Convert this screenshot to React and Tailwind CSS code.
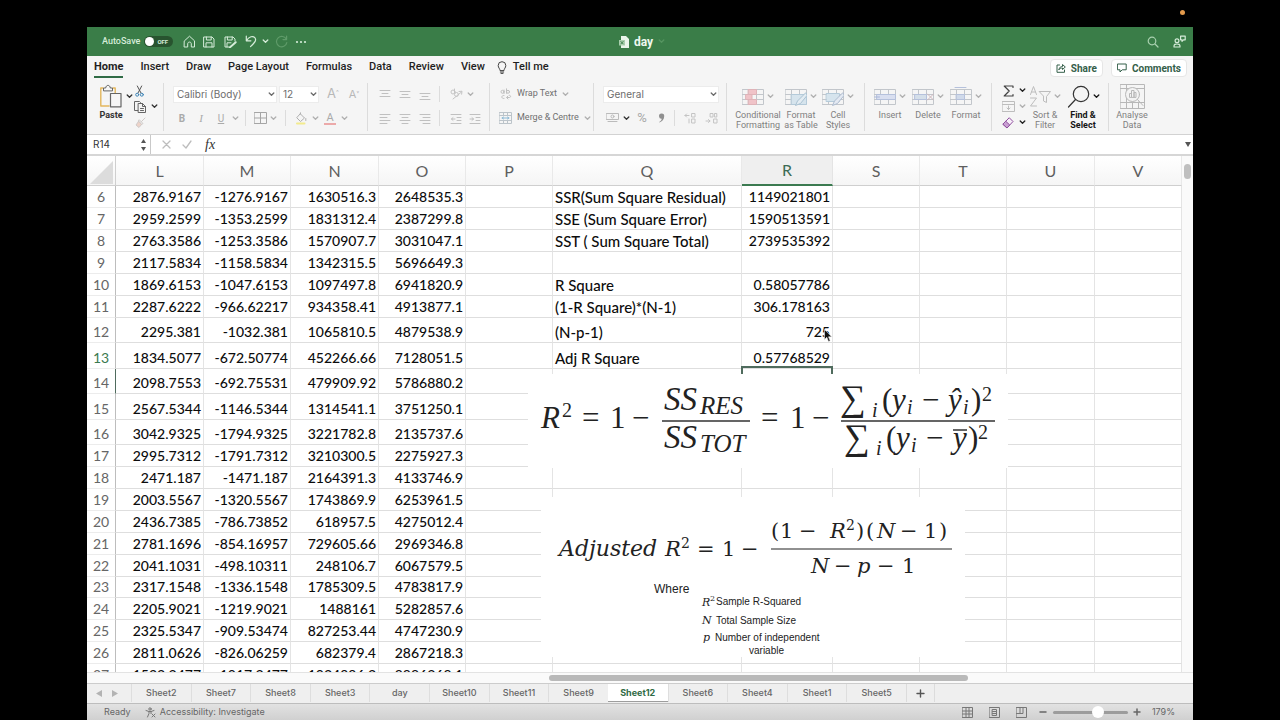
import React from "react";

const Chevron = ({ className = "text-[#6b6b6b]" }) => (
  <svg width="7" height="5" viewBox="0 0 7 5" className={"shrink-0 " + className} fill="none" stroke="currentColor" strokeWidth="1.3" strokeLinecap="round" strokeLinejoin="round" aria-hidden="true">
    <path d="M1.200 1l2.300 2.300L5.800 1" />
  </svg>
);

const Icon = ({ w = 12, h = 12, className = "", sw = 1, children }) => (
  <svg width={w} height={h} viewBox={`0 0 ${w} ${h}`} className={"shrink-0 " + className} fill="none" stroke="currentColor" strokeWidth={sw} strokeLinecap="round" strokeLinejoin="round" aria-hidden="true">
    {children}
  </svg>
);

const IconButton = ({ label, className = "", children }) => (
  <button type="button" aria-label={label} className={"flex shrink-0 items-center justify-center " + className}>
    {children}
  </button>
);

function TitleBar() {
  return (
    <header className="grid h-[29px] shrink-0 grid-cols-[1fr_auto_1fr] items-center bg-[#3a7d48] text-[#d5ecd9]">
      <div className="flex items-center pl-[15px] font-['Roboto',sans-serif]">
        <label className="flex items-center gap-1 text-[9px] font-medium">
          AutoSave
          <input type="checkbox" role="switch" className="peer sr-only" />
          <span className="flex h-[11px] w-[29px] items-center gap-[3px] rounded-full bg-[#28542f] pl-px text-[6px] font-bold text-[#d5ecd9]">
            <span className="h-[9px] w-[9px] rounded-full bg-white" />
            OFF
          </span>
        </label>
        <IconButton label="Home" className="ml-[9px] w-[14px]">
          <Icon w={13} h={13}><path d="M1.5 5.8L6.5 1.2l5 4.6v6.2H8.3V8.8c0-2.3-3.6-2.3-3.6 0V12H1.5z" /></Icon>
        </IconButton>
        <IconButton label="Save" className="ml-[6px] w-[14px]">
          <Icon><path d="M1 1h8l2 2v8H1z M3.4 1v3h4.8V1 M3 11V6.8h6V11" /></Icon>
        </IconButton>
        <IconButton label="Save as" className="ml-[7px] w-[14px]">
          <Icon w={13}><path d="M5 11H1V1h8l2 2v2 M3.4 1v3h4.8V1 M3 11V6.8h4" /><path d="M5.8 11.4l5.900-5.200" strokeWidth="2" /></Icon>
        </IconButton>
        <IconButton label="Undo" className="ml-[7px] w-[13px]">
          <Icon w={12} h={13} sw={1.2}><path d="M1.3 1.2v4.6h4.6 M1.6 5.4C4 1.4 8 .6 9.8 2.6c2 2.4.3 4.6-4.3 9" /></Icon>
        </IconButton>
        <IconButton label="Undo options" className="ml-[3px] w-[10px]"><Chevron className="text-[#d5ecd9]" /></IconButton>
        <IconButton label="Redo" className="ml-[4px] w-[14px] text-[#5f9b69]">
          <Icon w={13} h={13} sw={1.2}><path d="M11.6 1v3.6H8 M11.4 4.4A5.2 5.2 0 1 0 11.8 7.6" /></Icon>
        </IconButton>
        <IconButton label="More" className="ml-[6px] w-[14px]">
          <svg width="12" height="4" viewBox="0 0 12 4" fill="currentColor" aria-hidden="true"><circle cx="2" cy="2" r="1.1" /><circle cx="6" cy="2" r="1.1" /><circle cx="10" cy="2" r="1.1" /></svg>
        </IconButton>
      </div>
      <h1 className="flex items-center gap-[5px] pl-[4px] font-['Roboto',sans-serif] text-[12px] font-bold leading-[16px] text-[#eef8ef]">
        <svg width="10" height="12" viewBox="0 0 10 12" aria-hidden="true">
          <path d="M2 0h5l3 3v9H2z" fill="#e9f5ea" />
          <rect x="0" y="4" width="6" height="5.5" fill="#a9cfae" />
          <path d="M1.6 5.2l2.8 3M4.4 5.2l-2.8 3" stroke="#3a7d48" strokeWidth=".9" />
        </svg>
        day
        <Chevron className="text-[#559560]" />
      </h1>
      <div className="flex items-center justify-end gap-[14px] pr-[7px]">
        <IconButton label="Search" className="text-[#a9d0af]">
          <Icon sw={1.2}><circle cx="5" cy="5" r="3.8" /><path d="M8 8l3 3" /></Icon>
        </IconButton>
        <IconButton label="Account">
          <Icon w={13} h={13} sw={1.2}><circle cx="4" cy="5.8" r="1.9" /><path d="M1 12c-.3-3 1.600-3 3-3s3.300 0 3 3z M7.600 1.200h4.600v3.600h-1.800L9 6.300V4.800H7.600z" /></Icon>
        </IconButton>
      </div>
    </header>
  );
}

const MENU = ["Insert", "Draw", "Page Layout", "Formulas", "Data", "Review", "View"];

function MenuTabs() {
  return (
    <div className="flex h-6 shrink-0 items-center pl-[7px] pr-[6px] font-['Roboto',sans-serif] text-[#1f1f1f]">
      <nav aria-label="Ribbon tabs" className="flex items-center gap-[17px] pb-[2px] text-[11px] font-medium leading-[16px]">
        <a href="#home" className="relative font-bold">
          Home
          <span className="absolute inset-x-0 -bottom-[3px] h-[2px] bg-[#2f6b45]" />
        </a>
        {MENU.map((m) => (
          <a key={m} href={"#" + m.toLowerCase().replace(" ", "-")}>{m}</a>
        ))}
      </nav>
      <button type="button" className="ml-[12px] flex items-center gap-[6px] pb-[2px] text-[11px] font-medium leading-[16px]">
        <Icon w={10} h={13} className="text-[#444]"><path d="M3 9.200C3 7.600 1.200 6.800 1.200 4.500a3.800 3.800 0 0 1 7.600 0C8.800 6.800 7 7.600 7 9.200z M3.300 11h3.400 M4 12.400h2" /></Icon>
        Tell me
      </button>
      <div className="ml-auto flex items-center gap-2 text-[10px] font-bold text-[#35604a]">
        <button type="button" className="flex h-[18px] items-center gap-[5px] rounded-sm border border-[#e6e6e6] bg-white px-[5px]">
          <Icon w={10} h={10}><path d="M3.500 2H1v7.300h7.500V7 M3 6.500C3.300 4 5 3.500 6.500 3.500V1.500L9.300 4 6.500 6.500V5C5 5 4 5.300 3 6.500z" /></Icon>
          Share
        </button>
        <button type="button" className="flex h-[18px] items-center gap-[5px] rounded-sm border border-[#e6e6e6] bg-white px-[5px]">
          <Icon w={10} h={10}><path d="M.8 1h8.400v5.800H5.200L3 9V6.800H.8z" /></Icon>
          Comments
        </button>
      </div>
    </div>
  );
}

const Group = ({ className = "", children }) => (
  <div className={"flex shrink-0 border-r border-[#dcdcdc] " + className}>{children}</div>
);

const Rule = ({ className = "" }) => <span className={"h-4 w-px shrink-0 bg-[#dcdcdc] " + className} />;

const Lines = ({ rows }) => (
  <Icon h={11} className="text-[#c0c0c0]">
    {rows.map(([x1, x2], i) => <path key={i} d={`M${x1} ${1.5 + i * 3}H${x2}`} />)}
  </Icon>
);

const SelectBox = ({ label, value, className }) => (
  <div className={"relative flex shrink-0 " + className}>
    <select aria-label={label} defaultValue={value} className="h-[17px] w-full appearance-none border border-[#ececec] bg-white pl-[3px] text-[10px] leading-[15px] text-[#6d6d6d]">
      <option>{value}</option>
    </select>
    <span className="pointer-events-none absolute inset-y-0 right-[2px] flex items-center"><Chevron /></span>
  </div>
);

const BigButton = ({ lines, icon, chevron = true, active = false, className }) => (
  <button type="button" className={"flex shrink-0 flex-col items-center whitespace-nowrap text-[9px] leading-[10px] " + (active ? "font-bold text-[#161616] " : "font-normal text-[#808080] ") + className}>
    <span className="flex h-[27px] items-center gap-[3px]">
      {icon}
      {chevron && <Chevron className={active ? "text-[#161616]" : "text-[#b0b0b0]"} />}
    </span>
    {lines.map((l) => <span key={l}>{l}</span>)}
  </button>
);

const GridIcon = ({ children }) => (
  <Icon w={22} h={20} className="text-[#c2c6cb]">
    <path d="M.5 2.500h21v15H.5z M.5 7.500h21 M.5 12.500h21 M6.500 2.500v15 M14.500 2.500v15" />
    {children}
  </Icon>
);

function Ribbon() {
  return (
    <div role="toolbar" aria-label="Home" className="flex h-[54px] shrink-0 overflow-hidden py-[3px] font-['Roboto',sans-serif]">
      <Group className="w-[77px] pl-[9px]">
        <button type="button" className="flex w-[30px] flex-col items-center text-[9px] font-bold leading-[11px] text-[#333]">
          <Icon w={24} h={27} className="text-[#666]">
            <path d="M4 5H1.800v18H10 M14 5h2.200v5" stroke="#e3b75d" strokeWidth="1.400" />
            <path d="M4.500 7.500V5h2.200C7 1.500 11 1.500 11.300 5h2.200v2.500z" fill="#f6f6f6" />
            <path d="M11.500 10.500H22v13.300H11.500z" fill="#f6f6f6" strokeWidth="1.200" />
          </Icon>
          Paste
        </button>
        <IconButton label="Paste options" className="mt-[9px] h-[8px] w-[6px]"><Chevron className="text-[#333]" /></IconButton>
        <div className="flex flex-col items-start gap-[3px] pl-px pt-[1px]">
          <IconButton label="Cut" className="ml-[2px] h-[13px]">
            <Icon w={9} h={12} className="text-[#555]"><path d="M2.300 1l3.700 7 M6.700 1L3 8" /><circle cx="2.200" cy="9.700" r="1.500" stroke="#3f86b8" /><circle cx="6.800" cy="9.700" r="1.500" stroke="#3f86b8" /></Icon>
          </IconButton>
          <div className="flex items-center gap-1">
            <IconButton label="Copy" className="h-[13px] text-[#666]">
              <Icon w={14} h={13}><path d="M5 10.500H1.500V1.500h5l1 1 M5.500 3.500h4l3 3v6h-7z M9.500 3.500v3h3 M7.500 8.500h3 M7.500 10.500h3" /></Icon>
            </IconButton>
            <Chevron className="text-[#333]" />
          </div>
          <IconButton label="Format painter" className="ml-[2px] h-[13px]">
            <Icon w={11} h={11} className="text-[#cfcac8]"><path d="M10 1L6.500 4.500 M4.500 3l3.500 3.500-1.500 1L3.500 4.500z" /><path d="M3.500 4.500L1 8l3 2.500 2.500-3z" fill="#eed3c9" /></Icon>
          </IconButton>
        </div>
      </Group>

      <Group className="w-[204px] flex-col gap-[6px] pl-[9px] pt-[2px]">
        <div className="flex h-[18px] items-center gap-[2px] font-['Inter',sans-serif]">
          <SelectBox label="Font" value="Calibri (Body)" className="w-[104px]" />
          <SelectBox label="Font size" value="12" className="w-[40px]" />
          <IconButton label="Increase font size" className="ml-1 w-[16px] text-[13px] text-[#b8b8b8]">A<span className="mb-[6px] text-[6px]">^</span></IconButton>
          <IconButton label="Decrease font size" className="ml-1 w-[14px] text-[11px] text-[#b8b8b8]">A<span className="mb-[4px] text-[6px]">˅</span></IconButton>
        </div>
        <div className="flex h-[18px] items-center text-[10px] text-[#aaaaaa]">
          <IconButton label="Bold" className="w-[18px] font-bold">B</IconButton>
          <IconButton label="Italic" className="w-[20px] font-['Liberation_Serif',serif] text-[11px] italic">I</IconButton>
          <IconButton label="Underline" className="w-[20px] underline">U</IconButton>
          <IconButton label="Underline options" className="w-[8px]"><Chevron className="text-[#b0b0b0]" /></IconButton>
          <Rule className="mx-[6px]" />
          <IconButton label="Borders" className="w-[16px]"><Icon w={13} h={12} className="text-[#a5a5a5]"><path d="M.5.500h12v11H.5z M6.500.500v11 M.5 6h12" /></Icon></IconButton>
          <IconButton label="Border options" className="w-[10px]"><Chevron className="text-[#b0b0b0]" /></IconButton>
          <Rule className="mx-[7px]" />
          <IconButton label="Fill colour" className="w-[16px]"><Icon w={12} h={13} className="text-[#b0b0b0]"><path d="M5.500 2L9.500 6 5.500 9.500 2 6z M5.500 2V.8 M10.800 6.500v2" /><path d="M2 11.500h7.500" stroke="#f3eb8e" strokeWidth="2" /></Icon></IconButton>
          <IconButton label="Fill options" className="w-[12px]"><Chevron className="text-[#b0b0b0]" /></IconButton>
          <IconButton label="Font colour" className="w-[18px]"><span className="border-b-2 border-[#ecaaaa] px-[2px] text-[11px] leading-[11px]">A</span></IconButton>
          <IconButton label="Font colour options" className="w-[10px]"><Chevron className="text-[#b0b0b0]" /></IconButton>
        </div>
      </Group>

      <Group className="w-[122px] flex-col gap-[6px] pl-[10px] pt-[2px]">
        <div className="flex h-[18px] items-center">
          <IconButton label="Align top" className="w-[13px]"><Lines rows={[[1, 11], [3, 9], [1, 11]]} /></IconButton>
          <IconButton label="Align middle" className="ml-[7px] w-[13px] pt-[3px]"><Lines rows={[[1, 11], [3, 9], [1, 11]]} /></IconButton>
          <IconButton label="Align bottom" className="ml-[7px] w-[13px] pt-[6px]"><Lines rows={[[1, 11], [3, 9], [1, 11]]} /></IconButton>
          <Rule className="ml-[8px] mr-[9px]" />
          <IconButton label="Orientation" className="w-[14px]"><Icon w={13} className="text-[#c4c4c4]"><circle cx="3" cy="4" r="2" /><circle cx="6.500" cy="6.500" r="2" /><path d="M4.500 1v4 M3 11l8.500-7 M9 3.500l3-.3-.4 3" /></Icon></IconButton>
          <IconButton label="Orientation options" className="ml-[2px] w-[10px]"><Chevron className="text-[#b0b0b0]" /></IconButton>
        </div>
        <div className="flex h-[18px] items-center">
          <IconButton label="Align left" className="w-[13px]"><Lines rows={[[1, 11], [1, 8], [1, 11], [1, 8]]} /></IconButton>
          <IconButton label="Align centre" className="ml-[7px] w-[13px]"><Lines rows={[[1, 11], [3, 9], [1, 11], [3, 9]]} /></IconButton>
          <IconButton label="Align right" className="ml-[7px] w-[13px]"><Lines rows={[[1, 11], [4, 11], [1, 11], [4, 11]]} /></IconButton>
          <Rule className="ml-[8px] mr-[9px]" />
          <IconButton label="Decrease indent" className="w-[13px]"><Icon h={11} className="text-[#c0c0c0]"><path d="M1 1.500h10 M7 4.500h4 M7 7.500h4 M1 10.500h10 M5 6H1.500M3 4.600L1.500 6 3 7.400" /></Icon></IconButton>
          <IconButton label="Increase indent" className="ml-[6px] w-[13px]"><Icon h={11} className="text-[#c0c0c0]"><path d="M1 1.500h10 M7 4.500h4 M7 7.500h4 M1 10.500h10 M1 6h3.500M3 4.600L4.500 6 3 7.400" /></Icon></IconButton>
        </div>
      </Group>

      <Group className="w-[104px] flex-col gap-[6px] pl-[9px] pt-[2px] text-[9px] font-normal text-[#707070]">
        <button type="button" className="flex h-[18px] items-center gap-[5px] whitespace-nowrap">
          <Icon w={13} className="text-[#c0c0c0]"><circle cx="3.500" cy="3.800" r="1.500" /><path d="M5 2v3.500 M7.500 .8v4.500" /><circle cx="9" cy="3.800" r="1.500" /><path d="M5 7.500c-3-.5-3 3.500 0 3 M8 9.500h2.500c1.500 0 1.500-2.300 0-2.300 M9 8L7.500 9.500 9 11" /></Icon>
          Wrap Text <Chevron className="text-[#b0b0b0]" />
        </button>
        <button type="button" className="flex h-[18px] items-center gap-[5px] whitespace-nowrap">
          <Icon w={13} className="text-[#bcc4ca]"><path d="M.5.500h12v11H.5z M.5 3.500h12 M.5 8.500h12 M4.500.500v3M8.500.500v3M4.500 8.500v3M8.500 8.500v3" /><path d="M3 6h7 M4.500 5L3 6l1.500 1 M8.500 5L10 6 8.500 7" stroke="#8fbad5" /></Icon>
          Merge &amp; Centre <Chevron className="text-[#b0b0b0]" />
        </button>
      </Group>

      <Group className="w-[133px] flex-col gap-[6px] pl-[9px] pt-[2px]">
        <div className="flex h-[18px] items-center font-['Inter',sans-serif]"><SelectBox label="Number format" value="General" className="w-[116px]" /></div>
        <div className="flex h-[18px] items-center text-[#a8a8a8]">
          <IconButton label="Currency" className="ml-[2px] w-[14px]"><Icon w={13} h={10} className="text-[#bbbbbb]"><path d="M.5.500h12v6H.5z M2 8.500h9" /><circle cx="6.500" cy="3.500" r="1.500" /></Icon></IconButton>
          <IconButton label="Currency options" className="ml-[2px] w-[10px]"><Chevron className="text-[#333]" /></IconButton>
          <IconButton label="Percent" className="ml-1 w-[14px] text-[13px]">%</IconButton>
          <IconButton label="Comma" className="ml-[6px] w-[12px]"><svg width="7" height="10" viewBox="0 0 7 10" fill="#909090" aria-hidden="true"><path d="M3.500.5a2.600 2.600 0 0 1 2.700 2.800C6.200 6.500 4 8.500 1.500 9.500L1.200 9C2.800 8 3.600 7 3.700 5.700A2.600 2.600 0 1 1 3.500.5z" /></svg></IconButton>
          <Rule className="ml-[7px] mr-[8px]" />
          <IconButton label="Increase decimal" className="w-[14px]"><Icon w={13} className="text-[#c4c4c4]"><path d="M1 3.500h4 M2.500 2L1 3.500 2.500 5 M8 1.500h3v3.500H8z M8 7h3v4H8z M5 7v4" /></Icon></IconButton>
          <IconButton label="Decrease decimal" className="ml-[7px] w-[14px]"><Icon w={13} className="text-[#c4c4c4]"><path d="M1 9h4 M3.500 7.500L5 9l-1.500 1.500 M5.500 1.500h2.500v3.500H5.500z M9.800 1.500h2v3.500h-2z M9 7h3v4H9z" /></Icon></IconButton>
        </div>
      </Group>

      <Group className="w-[138px] pl-[8px]">
        <BigButton className="w-[46px]" lines={["Conditional", "Formatting"]} icon={<GridIcon><path d="M6.500 2.500h8v5h-8z M4 7.500h6v5H4z M6.500 12.500h8v5h-8z" fill="#f0c3c8" stroke="#dfb3b8" /></GridIcon>} />
        <BigButton className="w-[40px]" lines={["Format", "as Table"]} icon={<GridIcon><path d="M6.500 7.500h15v10h-15z" fill="#d6e4ed" stroke="#b4cad9" /><path d="M20.500 6l-8 8-2 4.500 5-2 6.500-8z" fill="#e3ecf2" stroke="#aac2d2" /></GridIcon>} />
        <BigButton className="w-[34px]" lines={["Cell", "Styles"]} icon={<GridIcon><path d="M4.500 6.500h13v8h-13z" fill="#d6e4ed" stroke="#b4cad9" /><path d="M20.500 6l-8 8-2 4.500 5-2 6.500-8z" fill="#e3e9f2" stroke="#aebcd0" /></GridIcon>} />
      </Group>

      <Group className="w-[127px] pl-[6px]">
        <BigButton className="w-[38px]" lines={["Insert"]} icon={<GridIcon><path d="M3 7.500h18.500v5H3z" fill="#d9dff0" stroke="#b5c1dc" /><path d="M.5 10h5" stroke="#aab8d8" /></GridIcon>} />
        <BigButton className="w-[38px]" lines={["Delete"]} icon={<GridIcon><path d="M3 7.500h11.500v5H3z" fill="#d5dfe9" stroke="#b5c1dc" /><path d="M15.500 7l6 6M21.500 7l-6 6" stroke="#cdb6bd" /></GridIcon>} />
        <BigButton className="w-[38px]" lines={["Format"]} icon={<GridIcon><path d="M6.500 7.500h8v5h-8z" fill="#d0daea" stroke="#b5c1dc" /><path d="M5 .500h11" stroke="#b5c1dc" /></GridIcon>} />
      </Group>

      <Group className="w-[117px] pl-[9px]">
        <div className="flex w-[25px] flex-col gap-[3px] pt-px">
          <div className="flex items-center gap-1">
            <IconButton label="AutoSum" className="h-[13px] w-[14px]"><Icon w={11} sw={1.200} className="text-[#444]"><path d="M10 2.500V1H1.200l5 5-5 5H10V9.500" /></Icon></IconButton>
            <Chevron className="text-[#222]" />
          </div>
          <div className="flex items-center gap-1">
            <IconButton label="Fill" className="h-[13px] w-[14px]"><Icon w={13} h={11} className="text-[#bdbdbd]"><path d="M.5.500h12v10H.5z M.5 3.500h12 M6.500 5v3.500 M5 7l1.500 1.500L8 7" /></Icon></IconButton>
            <Chevron className="text-[#b0b0b0]" />
          </div>
          <div className="flex items-center gap-1">
            <IconButton label="Clear" className="h-[13px] w-[14px]"><Icon w={12} className="text-[#8f4f9e]"><path d="M7.500 1l3.500 3.500-6 6.500L1.200 7.500z" fill="#f7eef9" /><path d="M4 4.500L7.800 8 5 11 1.200 7.500z" fill="#c9a0d3" /></Icon></IconButton>
            <Chevron className="text-[#222]" />
          </div>
        </div>
        <BigButton className="w-[38px]" lines={["Sort &", "Filter"]} icon={<Icon w={22} h={23} className="text-[#bdbdbd]"><path d="M1.500 9.500L4.500 1.500l3 8 M2.500 7h4 M1.500 13h6l-6 8h6 M10.500 6.500h11l-4 5v6l-3-1.500v-4.500z" /></Icon>} />
        <BigButton active className="w-[38px]" lines={["Find &", "Select"]} icon={<Icon w={23} h={24} sw={1.200} className="text-[#333]"><circle cx="14" cy="9" r="7.700" /><path d="M8.500 14.500L1.500 22" /></Icon>} />
      </Group>

      <div className="flex flex-1 pl-[8px]">
        <BigButton chevron={false} className="w-[30px]" lines={["Analyse", "Data"]} icon={<Icon w={25} h={25} className="text-[#b8b8b8]"><path d="M.5.500h24v24H.5z M.5 4.500h24 M.5 18.500h24 M6.500.500v24 M18.500 18v6 M12.500 18v6" /><circle cx="12.500" cy="10.500" r="7" fill="#f3f3f3" /><path d="M17.500 15.500l5.500 6 M9.500 13V9.500h2V13z M11.500 13V6.500h2.500V13z M14 13V8.500h2V13z" /></Icon>} />
      </div>
    </div>
  );
}

function FormulaBar() {
  return (
    <div className="flex h-[20px] shrink-0 items-center border-t border-[#d2d2d2] bg-white">
      <input aria-label="Name box" defaultValue="R14" className="w-[50px] pl-[6px] text-[10px] text-[#333]" />
      <button type="button" aria-label="Choose cell" className="flex w-[13px] justify-center">
        <svg width="5" height="12" viewBox="0 0 5 12" fill="#555" aria-hidden="true"><path d="M2.500 0L5 4H0z M2.500 12L0 8h5z" /></svg>
      </button>
      <span className="h-full w-px bg-[#c9c9c9]" />
      <IconButton label="Cancel" className="ml-[9px] w-[12px]"><Icon w={9} h={9} sw={1.300} className="text-[#bdbdbd]"><path d="M1 1l7 7M8 1L1 8" /></Icon></IconButton>
      <IconButton label="Enter" className="ml-[9px] w-[12px]"><Icon w={10} h={9} sw={1.300} className="text-[#bdbdbd]"><path d="M1 5l3 3 5-7" /></Icon></IconButton>
      <label htmlFor="formula" className="ml-[12px] font-['Liberation_Serif',serif] text-[14px] italic leading-[16px] text-[#333]">fx</label>
      <input id="formula" className="ml-2 min-w-0 flex-1 text-[10px]" />
      <IconButton label="Expand formula bar" className="w-[10px]"><svg width="6" height="5" viewBox="0 0 6 5" fill="#555" aria-hidden="true"><path d="M0 0h6L3 5z" /></svg></IconButton>
    </div>
  );
}

const COLUMNS = ["L", "M", "N", "O", "P", "Q", "R", "S", "T", "U", "V"];

const ROWS = [
  [6, "2876.9167", "-1276.9167", "1630516.3", "2648535.3", "SSR(Sum Square Residual)", "1149021801"],
  [7, "2959.2599", "-1353.2599", "1831312.4", "2387299.8", "SSE (Sum Square Error)", "1590513591"],
  [8, "2763.3586", "-1253.3586", "1570907.7", "3031047.1", "SST ( Sum Square Total)", "2739535392"],
  [9, "2117.5834", "-1158.5834", "1342315.5", "5696649.3"],
  [10, "1869.6153", "-1047.6153", "1097497.8", "6941820.9", "R Square", "0.58057786"],
  [11, "2287.6222", "-966.62217", "934358.41", "4913877.1", "(1-R Square)*(N-1)", "306.178163"],
  [12, "2295.381", "-1032.381", "1065810.5", "4879538.9", "(N-p-1)", "725"],
  [13, "1834.5077", "-672.50774", "452266.66", "7128051.5", "Adj R Square", "0.57768529"],
  [14, "2098.7553", "-692.75531", "479909.92", "5786880.2"],
  [15, "2567.5344", "-1146.5344", "1314541.1", "3751250.1"],
  [16, "3042.9325", "-1794.9325", "3221782.8", "2135737.6"],
  [17, "2995.7312", "-1791.7312", "3210300.5", "2275927.3"],
  [18, "2471.187", "-1471.187", "2164391.3", "4133746.9"],
  [19, "2003.5567", "-1320.5567", "1743869.9", "6253961.5"],
  [20, "2436.7385", "-786.73852", "618957.5", "4275012.4"],
  [21, "2781.1696", "-854.16957", "729605.66", "2969346.8"],
  [22, "2041.1031", "-498.10311", "248106.7", "6067579.5"],
  [23, "2317.1548", "-1336.1548", "1785309.5", "4783817.9"],
  [24, "2205.9021", "-1219.9021", "1488161", "5282857.6"],
  [25, "2325.5347", "-909.53474", "827253.44", "4747230.9"],
  [26, "2811.0626", "-826.06259", "682379.4", "2867218.3"],
  [27, "1523.3477", "-1017.3477", "1034996.3", "8886368.1"],
];

const rowHeight = (n) => {
  if (n === 12 || n === 14 || n === 16) return "h-[25px]";
  if (n === 13 || n === 15) return "h-[26px]";
  if (n === 23) return "h-[21px]";
  return "h-[22px]";
};

function Sheet() {
  const cell = "overflow-visible whitespace-nowrap border-b border-r border-b-[#dedede] border-r-[#e4e4e4] p-0 align-bottom";
  return (
    <table className="w-full table-fixed border-separate border-spacing-0 bg-white font-['Lato',sans-serif] text-[14px] font-medium leading-[20px] text-[#0c0c0c]">
      <colgroup>
        <col className="w-[29px]" />
        <col className="w-[88px]" />
        <col className="w-[87px]" />
        <col className="w-[88px]" />
        <col className="w-[87px]" />
        <col className="w-[87px]" />
        <col className="w-[189px]" />
        <col className="w-[91px]" />
        <col className="w-[87px]" />
        <col className="w-[87px]" />
        <col className="w-[88px]" />
        <col />
      </colgroup>
      <thead>
        <tr className="h-[30px] bg-linear-to-b from-white to-[#f5f5f5] text-[16px] text-[#5f5f5f]">
          <th className="border-b border-r border-[#cfcfcf] p-0 align-bottom">
            <svg width="25" height="25" viewBox="0 0 25 25" className="ml-auto mr-px" aria-hidden="true"><path d="M24 1v23H1z" fill="#dcdcdc" /></svg>
          </th>
          {COLUMNS.map((c) => (
            <th key={c} scope="col" className={"border-r p-0 font-normal " + (c === "R" ? "border-b-2 border-b-[#3b7a50] border-r-[#e4e4e4] bg-[#efefef] text-[#3d6b55]" : "border-b border-b-[#cfcfcf] border-r-[#e9e9e9]")}>{c}</th>
          ))}
        </tr>
      </thead>
      <tbody>
        {ROWS.map(([n, l, m, nn, o, q, r]) => (
          <tr key={n} className={rowHeight(n)}>
            <th scope="row" className={"border-b border-b-[#ececec] border-r p-0 align-bottom font-normal " + (n === 14 ? "border-r-[#4f6b5d] " : "border-r-[#bdbdbd] ") + (n === 13 ? "text-[#3b7a50]" : "text-[#666]")}>{n}</th>
            {[l, m, nn, o].map((v, i) => (
              <td key={i} className={cell + " pr-[2px] text-right"}>{v}</td>
            ))}
            <td className={cell} />
            <td className={cell + " pl-[2px] text-[15px]"}>{q}</td>
            <td className={cell + " relative pr-[2px] text-right"}>
              {r}
              {n === 14 && <span className="absolute -bottom-px -left-px -right-px -top-[3px] border-2 border-[#4f6b5d]" />}
            </td>
            <td className={cell} />
            <td className={cell} />
            <td className={cell} />
            <td className={cell} />
          </tr>
        ))}
      </tbody>
    </table>
  );
}

function RSquaredFigure() {
  return (
    <svg width="480" height="94" viewBox="0 0 480 94" className="absolute left-[441px] top-[218px] bg-white font-['Liberation_Serif',serif]" fill="#222" role="img" aria-label="R squared formula">
      <g fontSize="31">
        <text x="13" y="54" fontStyle="italic">R</text>
        <text x="34" y="43" fontSize="20">2</text>
        <text x="54" y="54">=</text>
        <text x="82" y="54">1</text>
        <text x="104" y="54">−</text>
        <text x="136" y="36" fontSize="33" fontStyle="italic">SS</text>
        <text x="172" y="40" fontSize="25" fontStyle="italic">RES</text>
        <text x="136" y="74" fontSize="33" fontStyle="italic">SS</text>
        <text x="172" y="78" fontSize="25" fontStyle="italic">TOT</text>
        <text x="233" y="54">=</text>
        <text x="262" y="54">1</text>
        <text x="284" y="54">−</text>
        <text x="312" y="36" fontSize="36">∑</text>
        <text x="344" y="43" fontSize="20" fontStyle="italic">i</text>
        <text x="354" y="36">(</text>
        <text x="364" y="36" fontStyle="italic">y</text>
        <text x="379" y="40" fontSize="20" fontStyle="italic">i</text>
        <text x="394" y="36">−</text>
        <text x="420" y="36" fontStyle="italic">ŷ</text>
        <text x="435" y="40" fontSize="20" fontStyle="italic">i</text>
        <text x="443" y="36">)</text>
        <text x="454" y="27" fontSize="20">2</text>
        <text x="316" y="75" fontSize="36">∑</text>
        <text x="348" y="81" fontSize="20" fontStyle="italic">i</text>
        <text x="358" y="74">(</text>
        <text x="368" y="74" fontStyle="italic">y</text>
        <text x="383" y="78" fontSize="20" fontStyle="italic">i</text>
        <text x="398" y="74">−</text>
        <text x="425" y="74" fontStyle="italic">y</text>
        <text x="440" y="74">)</text>
        <text x="450" y="65" fontSize="20">2</text>
      </g>
      <path d="M134 47h88 M313 47h154 M425 56h14" stroke="#333" strokeWidth="1.300" />
    </svg>
  );
}

function AdjustedFigure() {
  return (
    <svg width="424" height="160" viewBox="0 0 424 160" className="absolute left-[454px] top-[341px] bg-white font-['DejaVu_Serif',serif]" fill="#222" role="img" aria-label="Adjusted R squared formula">
      <g fontSize="21">
        <text x="18" y="59" fontSize="22" fontStyle="italic">Adjusted</text>
        <text x="124" y="59" fontStyle="italic">R</text>
        <text x="140" y="51" fontSize="14">2</text>
        <text x="156" y="59">=</text>
        <text x="181" y="59">1</text>
        <text x="200" y="59">−</text>
        <text x="230" y="41">(</text>
        <text x="239" y="41">1</text>
        <text x="258" y="41">−</text>
        <text x="289" y="41" fontStyle="italic">R</text>
        <text x="305" y="33" fontSize="14">2</text>
        <text x="315" y="41">)</text>
        <text x="325" y="41">(</text>
        <text x="336" y="41" fontStyle="italic">N</text>
        <text x="359" y="41">−</text>
        <text x="383" y="41">1</text>
        <text x="398" y="41">)</text>
        <text x="270" y="76" fontStyle="italic">N</text>
        <text x="293" y="76">−</text>
        <text x="316" y="76" fontStyle="italic">p</text>
        <text x="336" y="76">−</text>
        <text x="361" y="76">1</text>
      </g>
      <path d="M230 52h181" stroke="#222" strokeWidth="1.200" />
      <g fontSize="10" fontFamily="'Liberation Sans', sans-serif">
        <text x="113" y="96" fontSize="12">Where</text>
        <text x="175" y="108">Sample R-Squared</text>
        <text x="175" y="127">Total Sample Size</text>
        <text x="174" y="144">Number of independent</text>
        <text x="208" y="157">variable</text>
      </g>
      <g fontSize="11" fontStyle="italic">
        <text x="161" y="109">R</text>
        <text x="169" y="104" fontSize="8" fontStyle="normal">2</text>
        <text x="161" y="127">N</text>
        <text x="162" y="144">p</text>
      </g>
    </svg>
  );
}

const SHEETS = ["Sheet2", "Sheet7", "Sheet8", "Sheet3", "day", "Sheet10", "Sheet11", "Sheet9", "Sheet12", "Sheet6", "Sheet4", "Sheet1", "Sheet5"];

function SheetTabs() {
  return (
    <div className="flex h-[20px] shrink-0 items-start border-t border-[#cccccc] bg-[#efefef] text-[9px] text-[#666]">
      <div className="flex h-[18px] w-[44px] shrink-0 items-center gap-[10px] pl-[9px]">
        <IconButton label="Previous sheet"><svg width="6" height="7" viewBox="0 0 6 7" fill="#b3b3b3" aria-hidden="true"><path d="M6 0v7L0 3.500z" /></svg></IconButton>
        <IconButton label="Next sheet"><svg width="6" height="7" viewBox="0 0 6 7" fill="#b3b3b3" aria-hidden="true"><path d="M0 0v7l6-3.500z" /></svg></IconButton>
      </div>
      <div role="tablist" aria-label="Sheets" className="grid h-[18px] w-[775px] shrink-0 grid-cols-[repeat(13,1fr)] font-medium">
        {SHEETS.map((s) => (
          <button
            key={s}
            type="button"
            role="tab"
            aria-selected={s === "Sheet12"}
            className={s === "Sheet12" ? "border-b border-[#9d9d9d] bg-white font-bold text-[#2f6b45]" : "border-l border-[#dedede]"}
          >
            {s}
          </button>
        ))}
      </div>
      <button type="button" aria-label="Add sheet" className="flex h-[18px] w-[29px] shrink-0 items-center justify-center border-x border-[#dcdcdc]">
        <Icon w={9} h={9} sw={1.400} className="text-[#555]"><path d="M4.500 1v7M1 4.500h7" /></Icon>
      </button>
    </div>
  );
}

function StatusBar() {
  return (
    <footer className="flex h-[17px] shrink-0 items-center border-t border-[#bdbdbd] bg-linear-to-b from-[#e2e2e2] to-[#d0d0d0] pl-[17px] pr-[18px] text-[9px] text-[#666]">
      <span>Ready</span>
      <button type="button" className="ml-[14px] flex items-center gap-[4px]">
        <Icon w={11} h={11} className="text-[#777]"><circle cx="5" cy="2" r="1.200" /><path d="M1 3.500l3 1v2L2.500 10 M9 3.500l-3 1v2 M4 4.500h2 M7 7l3 3M10 7l-3 3" /></Icon>
        Accessibility: Investigate
      </button>
      <div className="ml-auto flex items-center">
        <IconButton label="Normal view"><Icon w={11} h={11} className="text-[#777]"><path d="M.5.500h10v10H.5z M4 .5v10 M7 .5v10 M.5 4h10 M.5 7h10" /></Icon></IconButton>
        <IconButton label="Page layout view" className="ml-4"><Icon w={11} h={11} className="text-[#777]"><path d="M.5.500h10v10H.5z M3.500 2.500h4v6h-4z M3.500 4.500h4 M3.500 6.500h4" /></Icon></IconButton>
        <IconButton label="Page break view" className="ml-4"><Icon w={11} h={11} className="text-[#777]"><path d="M.5.500h10v10H.5z M.5 6.500h6.500V.5 M4 .5v6" /></Icon></IconButton>
        <IconButton label="Zoom out" className="ml-[11px] w-[10px]"><Icon w={8} h={8} sw={1.500}><path d="M1 4h6" /></Icon></IconButton>
        <input
          type="range"
          aria-label="Zoom"
          min="0"
          max="100"
          defaultValue="62"
          className="mx-[5px] h-[3px] w-[75px] appearance-none rounded-full bg-[#9c9c9c] [&::-webkit-slider-thumb]:h-[12px] [&::-webkit-slider-thumb]:w-[12px] [&::-webkit-slider-thumb]:appearance-none [&::-webkit-slider-thumb]:rounded-full [&::-webkit-slider-thumb]:bg-white"
        />
        <IconButton label="Zoom in" className="w-[8px]"><Icon w={8} h={8} sw={1.500}><path d="M1 4h6M4 1v6" /></Icon></IconButton>
        <span className="ml-[11px]">179%</span>
      </div>
    </footer>
  );
}

export default function App() {
  return (
    <div className="flex h-screen flex-col bg-black px-[87px] font-['Inter',sans-serif]">
      <div className="flex h-[27px] shrink-0 justify-end pr-[8px] pt-[10px]">
        <span className="h-[5px] w-[5px] rounded-full bg-[#e39a4c]" />
      </div>
      <main className="flex min-h-0 flex-1 flex-col overflow-hidden bg-[#f5f5f5]">
        <TitleBar />
        <MenuTabs />
        <Ribbon />
        <FormulaBar />
        <div className="relative flex min-h-0 flex-1 overflow-hidden border-t-2 border-[#d6d6d6] bg-white">
          <div className="relative min-w-0 flex-1">
            <Sheet />
            <RSquaredFigure />
            <AdjustedFigure />
            <svg width="8" height="13" viewBox="0 0 8 13" className="absolute left-[737px] top-[173px]" aria-hidden="true"><path d="M.5.500v10l2.300-2.200L4.500 12.500l1.700-.7-1.700-4H7.700z" fill="#111" stroke="#eee" strokeWidth=".6" /></svg>
          </div>
          <div className="w-[11px] shrink-0 bg-[#fafafa] px-[2px] pt-[8px]"><div className="h-[15px] rounded-full bg-[#bfbfbf]" /></div>
        </div>
        <div className="flex h-[11px] shrink-0 items-center border-t border-[#e3e3e3] bg-[#fafafa]">
          <div className="ml-[462px] h-[6px] w-[419px] rounded-full bg-[#b9b9b9]" />
        </div>
        <SheetTabs />
        <StatusBar />
      </main>
    </div>
  );
}
